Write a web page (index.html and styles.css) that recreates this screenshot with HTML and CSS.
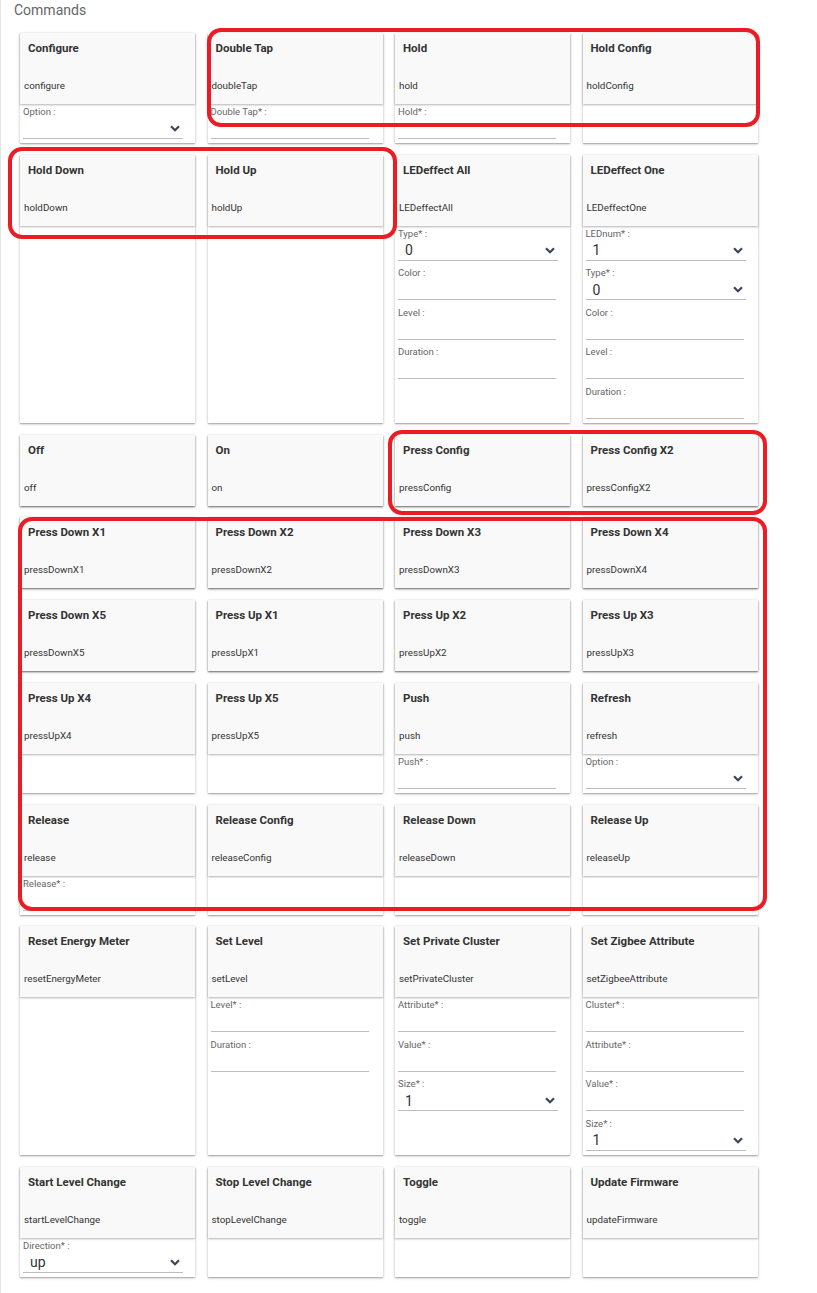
FILE: index.html
```html
<!DOCTYPE html>
<html>
<head>
    <title>Commands</title>
    <link rel="stylesheet" href="styles.css">
</head>
<body>
    <div class="panel">
        <div class="panel-title">Commands</div>

        <div class="cmd-grid">
            <!-- row 1 -->
            <div class="cmd">
                <div class="cmd-head"><div class="cmd-title">Configure</div><div class="cmd-name">configure</div></div>
                <div class="cmd-body">
                    <div class="field"><label>Option :</label><div class="select"><span></span><svg viewBox="0 0 10 7"><path d="M1 1.2 5 5.2 9 1.2"/></svg></div></div>
                </div>
            </div>
            <div class="cmd">
                <div class="cmd-head"><div class="cmd-title">Double Tap</div><div class="cmd-name">doubleTap</div></div>
                <div class="cmd-body">
                    <div class="field"><label>Double Tap* :</label><div class="input"></div></div>
                </div>
            </div>
            <div class="cmd">
                <div class="cmd-head"><div class="cmd-title">Hold</div><div class="cmd-name">hold</div></div>
                <div class="cmd-body">
                    <div class="field"><label>Hold* :</label><div class="input"></div></div>
                </div>
            </div>
            <div class="cmd">
                <div class="cmd-head"><div class="cmd-title">Hold Config</div><div class="cmd-name">holdConfig</div></div>
            </div>

            <!-- row 2 -->
            <div class="cmd">
                <div class="cmd-head"><div class="cmd-title">Hold Down</div><div class="cmd-name">holdDown</div></div>
            </div>
            <div class="cmd">
                <div class="cmd-head"><div class="cmd-title">Hold Up</div><div class="cmd-name">holdUp</div></div>
            </div>
            <div class="cmd">
                <div class="cmd-head"><div class="cmd-title">LEDeffect All</div><div class="cmd-name">LEDeffectAll</div></div>
                <div class="cmd-body">
                    <div class="field"><label>Type* :</label><div class="select"><span>0</span><svg viewBox="0 0 10 7"><path d="M1 1.2 5 5.2 9 1.2"/></svg></div></div>
                    <div class="field"><label>Color :</label><div class="input"></div></div>
                    <div class="field"><label>Level :</label><div class="input"></div></div>
                    <div class="field"><label>Duration :</label><div class="input"></div></div>
                </div>
            </div>
            <div class="cmd">
                <div class="cmd-head"><div class="cmd-title">LEDeffect One</div><div class="cmd-name">LEDeffectOne</div></div>
                <div class="cmd-body">
                    <div class="field"><label>LEDnum* :</label><div class="select"><span>1</span><svg viewBox="0 0 10 7"><path d="M1 1.2 5 5.2 9 1.2"/></svg></div></div>
                    <div class="field"><label>Type* :</label><div class="select"><span>0</span><svg viewBox="0 0 10 7"><path d="M1 1.2 5 5.2 9 1.2"/></svg></div></div>
                    <div class="field"><label>Color :</label><div class="input"></div></div>
                    <div class="field"><label>Level :</label><div class="input"></div></div>
                    <div class="field"><label>Duration :</label><div class="input"></div></div>
                </div>
            </div>

            <!-- row 3 -->
            <div class="cmd">
                <div class="cmd-head"><div class="cmd-title">Off</div><div class="cmd-name">off</div></div>
            </div>
            <div class="cmd">
                <div class="cmd-head"><div class="cmd-title">On</div><div class="cmd-name">on</div></div>
            </div>
            <div class="cmd">
                <div class="cmd-head"><div class="cmd-title">Press Config</div><div class="cmd-name">pressConfig</div></div>
            </div>
            <div class="cmd">
                <div class="cmd-head"><div class="cmd-title">Press Config X2</div><div class="cmd-name">pressConfigX2</div></div>
            </div>

            <!-- row 4 -->
            <div class="cmd">
                <div class="cmd-head"><div class="cmd-title">Press Down X1</div><div class="cmd-name">pressDownX1</div></div>
            </div>
            <div class="cmd">
                <div class="cmd-head"><div class="cmd-title">Press Down X2</div><div class="cmd-name">pressDownX2</div></div>
            </div>
            <div class="cmd">
                <div class="cmd-head"><div class="cmd-title">Press Down X3</div><div class="cmd-name">pressDownX3</div></div>
            </div>
            <div class="cmd">
                <div class="cmd-head"><div class="cmd-title">Press Down X4</div><div class="cmd-name">pressDownX4</div></div>
            </div>

            <!-- row 5 -->
            <div class="cmd">
                <div class="cmd-head"><div class="cmd-title">Press Down X5</div><div class="cmd-name">pressDownX5</div></div>
            </div>
            <div class="cmd">
                <div class="cmd-head"><div class="cmd-title">Press Up X1</div><div class="cmd-name">pressUpX1</div></div>
            </div>
            <div class="cmd">
                <div class="cmd-head"><div class="cmd-title">Press Up X2</div><div class="cmd-name">pressUpX2</div></div>
            </div>
            <div class="cmd">
                <div class="cmd-head"><div class="cmd-title">Press Up X3</div><div class="cmd-name">pressUpX3</div></div>
            </div>

            <!-- row 6 -->
            <div class="cmd">
                <div class="cmd-head"><div class="cmd-title">Press Up X4</div><div class="cmd-name">pressUpX4</div></div>
            </div>
            <div class="cmd">
                <div class="cmd-head"><div class="cmd-title">Press Up X5</div><div class="cmd-name">pressUpX5</div></div>
            </div>
            <div class="cmd">
                <div class="cmd-head"><div class="cmd-title">Push</div><div class="cmd-name">push</div></div>
                <div class="cmd-body">
                    <div class="field"><label>Push* :</label><div class="input"></div></div>
                </div>
            </div>
            <div class="cmd">
                <div class="cmd-head"><div class="cmd-title">Refresh</div><div class="cmd-name">refresh</div></div>
                <div class="cmd-body">
                    <div class="field"><label>Option :</label><div class="select"><span></span><svg viewBox="0 0 10 7"><path d="M1 1.2 5 5.2 9 1.2"/></svg></div></div>
                </div>
            </div>

            <!-- row 7 -->
            <div class="cmd">
                <div class="cmd-head"><div class="cmd-title">Release</div><div class="cmd-name">release</div></div>
                <div class="cmd-body">
                    <div class="field"><label>Release* :</label><div class="input"></div></div>
                </div>
            </div>
            <div class="cmd">
                <div class="cmd-head"><div class="cmd-title">Release Config</div><div class="cmd-name">releaseConfig</div></div>
            </div>
            <div class="cmd">
                <div class="cmd-head"><div class="cmd-title">Release Down</div><div class="cmd-name">releaseDown</div></div>
            </div>
            <div class="cmd">
                <div class="cmd-head"><div class="cmd-title">Release Up</div><div class="cmd-name">releaseUp</div></div>
            </div>

            <!-- row 8 -->
            <div class="cmd">
                <div class="cmd-head"><div class="cmd-title">Reset Energy Meter</div><div class="cmd-name">resetEnergyMeter</div></div>
            </div>
            <div class="cmd">
                <div class="cmd-head"><div class="cmd-title">Set Level</div><div class="cmd-name">setLevel</div></div>
                <div class="cmd-body">
                    <div class="field"><label>Level* :</label><div class="input"></div></div>
                    <div class="field"><label>Duration :</label><div class="input"></div></div>
                </div>
            </div>
            <div class="cmd">
                <div class="cmd-head"><div class="cmd-title">Set Private Cluster</div><div class="cmd-name">setPrivateCluster</div></div>
                <div class="cmd-body">
                    <div class="field"><label>Attribute* :</label><div class="input"></div></div>
                    <div class="field"><label>Value* :</label><div class="input"></div></div>
                    <div class="field"><label>Size* :</label><div class="select"><span>1</span><svg viewBox="0 0 10 7"><path d="M1 1.2 5 5.2 9 1.2"/></svg></div></div>
                </div>
            </div>
            <div class="cmd">
                <div class="cmd-head"><div class="cmd-title">Set Zigbee Attribute</div><div class="cmd-name">setZigbeeAttribute</div></div>
                <div class="cmd-body">
                    <div class="field"><label>Cluster* :</label><div class="input"></div></div>
                    <div class="field"><label>Attribute* :</label><div class="input"></div></div>
                    <div class="field"><label>Value* :</label><div class="input"></div></div>
                    <div class="field"><label>Size* :</label><div class="select"><span>1</span><svg viewBox="0 0 10 7"><path d="M1 1.2 5 5.2 9 1.2"/></svg></div></div>
                </div>
            </div>

            <!-- row 9 -->
            <div class="cmd">
                <div class="cmd-head"><div class="cmd-title">Start Level Change</div><div class="cmd-name">startLevelChange</div></div>
                <div class="cmd-body">
                    <div class="field"><label>Direction* :</label><div class="select"><span>up</span><svg viewBox="0 0 10 7"><path d="M1 1.2 5 5.2 9 1.2"/></svg></div></div>
                </div>
            </div>
            <div class="cmd">
                <div class="cmd-head"><div class="cmd-title">Stop Level Change</div><div class="cmd-name">stopLevelChange</div></div>
            </div>
            <div class="cmd">
                <div class="cmd-head"><div class="cmd-title">Toggle</div><div class="cmd-name">toggle</div></div>
            </div>
            <div class="cmd">
                <div class="cmd-head"><div class="cmd-title">Update Firmware</div><div class="cmd-name">updateFirmware</div></div>
            </div>
        </div>

        <!-- red annotation boxes drawn over the grid -->
        <div class="mark mark-hold"></div>
        <div class="mark mark-holdupdown"></div>
        <div class="mark mark-pressconfig"></div>
        <div class="mark mark-press"></div>
    </div>
</body>
</html>
```

FILE: styles.css
```css
body {
    margin: 0;
    padding: 0;
    font-family: Roboto, "Noto Sans", Arial, sans-serif;
    background-color: #ffffff;
    color: #333;
}

.panel {
    position: relative;
    min-height: 1293px;
    box-sizing: border-box;
    border-left: 1px solid #e4e4e4;
    padding-left: 13px;
}

.panel-title {
    font-size: 14px;
    line-height: 20px;
    color: #666;
}

.cmd-grid {
    display: grid;
    grid-template-columns: repeat(4, 175px);
    gap: 11.75px 12.5px;
    margin: 13px 0 0 6px;
}

.cmd {
    display: flex;
    flex-direction: column;
    background: #fff;
    box-shadow: 0 1px 3px rgba(0, 0, 0, 0.22), 0 1px 1px rgba(0, 0, 0, 0.18);
}

.cmd-head {
    position: relative;
    z-index: 1;
    height: 71px;
    box-sizing: border-box;
    padding: 7px 4px 0;
    background: #f9f9f9;
    box-shadow: 0 1px 2px rgba(0, 0, 0, 0.3);
}

.cmd-title {
    padding-left: 4px;
    font-size: 11.5px;
    font-weight: 700;
    line-height: 16px;
    color: #333;
}

.cmd-name {
    margin-top: 23px;
    font-size: 9.8px;
    line-height: 14px;
    color: #333;
}

.cmd-body {
    display: flex;
    flex-direction: column;
    gap: 4.5px;
    padding: 0 3px 4px;
}

.field label {
    display: block;
    padding-top: 2px;
    font-size: 9.5px;
    line-height: 12px;
    color: #666;
}

.input {
    width: 158px;
    height: 20px;
    border-bottom: 1px solid #bdbdbd;
}

.select {
    display: flex;
    align-items: center;
    justify-content: space-between;
    width: 160px;
    height: 21px;
    box-sizing: border-box;
    padding: 1px 3px 0 7px;
    border-bottom: 1px solid #bdbdbd;
    font-size: 14px;
    color: #333;
}

.select svg {
    width: 10px;
    height: 7px;
    fill: none;
    stroke: #3a4659;
    stroke-width: 2.2;
}

.mark {
    position: absolute;
    z-index: 5;
    box-sizing: border-box;
    border: 4px solid #ec1c24;
    border-radius: 14px;
}

.mark-hold {
    left: 206px;
    top: 28px;
    width: 553px;
    height: 99px;
}

.mark-holdupdown {
    left: 7px;
    top: 147px;
    width: 389px;
    height: 92px;
}

.mark-pressconfig {
    left: 387px;
    top: 430px;
    width: 379px;
    height: 85px;
}

.mark-press {
    left: 17px;
    top: 517px;
    width: 749px;
    height: 394px;
}
```
